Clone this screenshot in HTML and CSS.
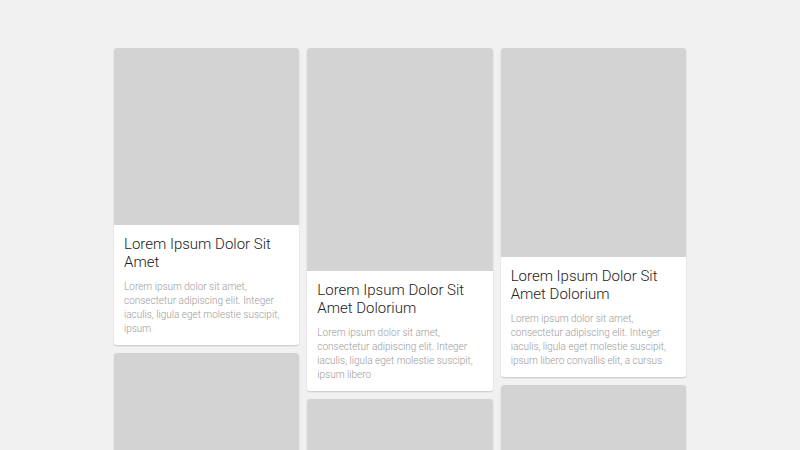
FILE: index.html
```html
<!DOCTYPE html>
<html>
<head>
<meta charset="utf-8">
<link rel="stylesheet" href="styles.css">
</head>
<body>
<div class="grid">
  <div class="col">
    <div class="card">
      <div class="media h177"></div>
      <div class="content">
        <h2 class="title">Lorem Ipsum Dolor Sit Amet</h2>
        <p class="text">Lorem ipsum dolor sit amet, consectetur adipiscing elit. Integer iaculis, ligula eget molestie suscipit, ipsum</p>
      </div>
    </div>
    <div class="card">
      <div class="media h200"></div>
    </div>
  </div>
  <div class="col">
    <div class="card">
      <div class="media h223"></div>
      <div class="content">
        <h2 class="title">Lorem Ipsum Dolor Sit Amet Dolorium</h2>
        <p class="text">Lorem ipsum dolor sit amet, consectetur adipiscing elit. Integer iaculis, ligula eget molestie suscipit, ipsum libero</p>
      </div>
    </div>
    <div class="card">
      <div class="media h200"></div>
    </div>
  </div>
  <div class="col">
    <div class="card">
      <div class="media h209"></div>
      <div class="content">
        <h2 class="title">Lorem Ipsum Dolor Sit Amet Dolorium</h2>
        <p class="text">Lorem ipsum dolor sit amet, consectetur adipiscing elit. Integer iaculis, ligula eget molestie suscipit, ipsum libero convallis elit, a cursus</p>
      </div>
    </div>
    <div class="card">
      <div class="media h200"></div>
    </div>
  </div>
</div>
</body>
</html>
```
FILE: styles.css
```css
html, body {
  margin: 0;
  padding: 0;
  background: #f1f1f1;
  font-family: Roboto, "Liberation Sans", sans-serif;
  overflow: hidden;
  height: 450px;
}
.grid {
  width: 572px;
  margin: 48px auto 0;
  display: flex;
  gap: 8px;
  align-items: flex-start;
}
.col {
  flex: 1 1 0;
  display: flex;
  flex-direction: column;
  gap: 8px;
  min-width: 0;
}
.card {
  background: #fff;
  border-radius: 3px;
  overflow: hidden;
  box-shadow: 0 1px 2px rgba(0,0,0,0.12), 0 1px 1px rgba(0,0,0,0.06);
}
.media {
  background: #d3d3d3;
}
.h177 { height: 177px; }
.h223 { height: 223px; }
.h209 { height: 209px; }
.h200 { height: 200px; }
.content {
  padding: 10px 10px 9px;
}
.title {
  margin: 0 0 9px;
  font-size: 15px;
  line-height: 18px;
  font-weight: 300;
  color: #212121;
}
.text {
  margin: 0;
  font-size: 10px;
  line-height: 14px;
  font-weight: 300;
  color: #9b9b9b;
}
```
